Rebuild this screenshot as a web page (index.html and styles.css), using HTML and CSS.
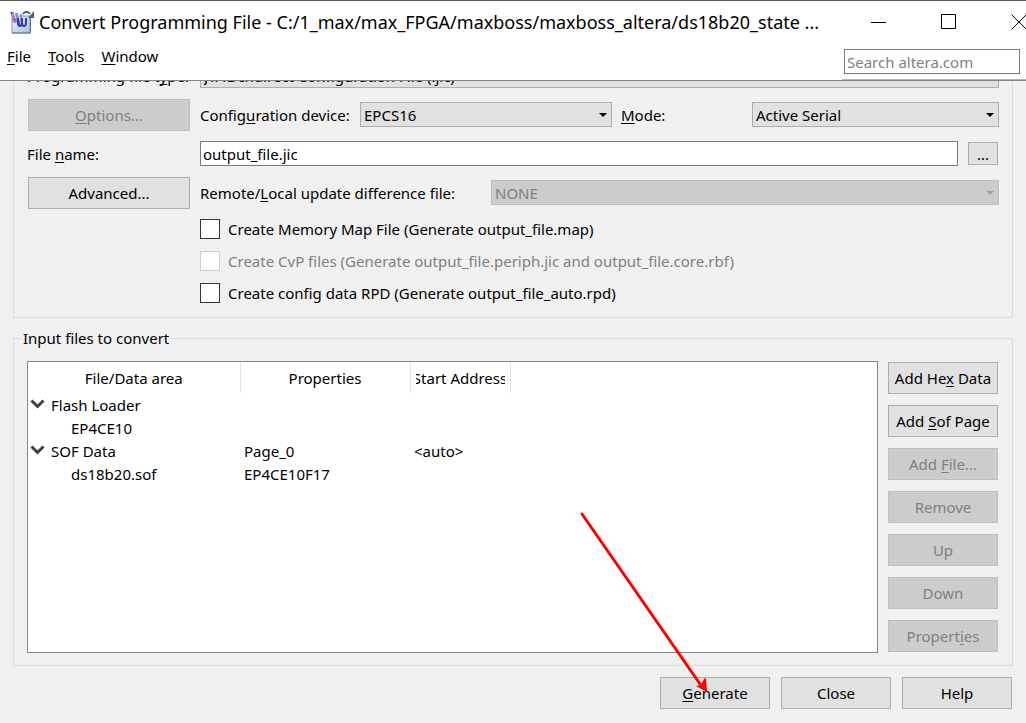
FILE: index.html
```html
<!DOCTYPE html>
<html lang="en">
<head>
    <meta charset="UTF-8">
    <meta name="viewport" content="width=device-width, initial-scale=1.0">
    <title>Convert Programming File</title>
    <link rel="stylesheet" href="styles.css">
</head>
<body>
<header>
    <div class="titlebar">
        <svg class="app-icon" width="24" height="24" viewBox="0 0 24 24">
            <defs>
                <linearGradient id="box" x1="0" y1="0" x2="1" y2="1">
                    <stop offset="0" stop-color="#f4f8fd"/>
                    <stop offset="1" stop-color="#a9bcd8"/>
                </linearGradient>
            </defs>
            <path d="M2 6h18v17H2z" fill="url(#box)" stroke="#8496b4"/>
            <path d="M2 23h18.500V7" fill="none" stroke="#5c7398"/>
            <path d="M1 2l5 10M6 3l4 12" stroke="#c8385c" stroke-width="2"/>
            <path d="M3 2v7c0 4 4 4 4 0V3M7 3v6c0 4 4 4 4 0V4" fill="none" stroke="#7f95dc" stroke-width="2"/>
            <path d="M8 8v5c0 4 4 4 4 0V8M12 8v5c0 4 4 4 4 0V8" fill="none" stroke="#2f3fae" stroke-width="2"/>
            <path d="M13 4c2-3 5-3 7 0" fill="none" stroke="#55606e" stroke-width="2"/>
            <path d="M24 1v7h-6z" fill="#55606e"/>
        </svg>
        <h1>Convert Programming File - C:/1_max/max_FPGA/maxboss/maxboss_altera/ds18b20_state ...</h1>
        <div class="window-buttons">
            <button aria-label="Minimize">
                <svg width="16" height="16" viewBox="0 0 16 16"><path d="M0 8.500h15" stroke="#000"/></svg>
            </button>
            <button aria-label="Maximize">
                <svg width="16" height="16" viewBox="0 0 16 16"><path d="M.5.5h14v14H.5z" fill="none" stroke="#000"/></svg>
            </button>
            <button aria-label="Close window">
                <svg width="16" height="16" viewBox="0 0 16 16"><path d="M.5.5l15 15M15.500.5l-15 15" stroke="#000"/></svg>
            </button>
        </div>
    </div>
    <div class="menubar">
        <nav>
            <a href="#"><u>F</u>ile</a>
            <a href="#"><u>T</u>ools</a>
            <a href="#"><u>W</u>indow</a>
        </nav>
        <div class="search">
            <input type="text" placeholder="Search altera.com" aria-label="Search altera.com">
        </div>
    </div>
</header>

<main>
    <section class="group output">
        <div class="side">
            <label for="fileType">Programming file t<u>y</u>pe:</label>
        </div>
        <div class="row">
            <div class="select grow">
                <select id="fileType">
                    <option>JTAG Indirect Configuration File (.jic)</option>
                </select>
            </div>
        </div>

        <div class="side">
            <button class="btn" disabled><u>O</u>ptions...</button>
        </div>
        <div class="row">
            <label class="device-label" for="device">Config<u>u</u>ration device:</label>
            <div class="select device-select">
                <select id="device">
                    <option>EPCS16</option>
                </select>
            </div>
            <label class="mode-label" for="mode"><u>M</u>ode:</label>
            <div class="select mode-select">
                <select id="mode">
                    <option>Active Serial</option>
                </select>
            </div>
        </div>

        <div class="side">
            <label for="fileName">File <u>n</u>ame:</label>
        </div>
        <div class="row">
            <input class="text grow" type="text" id="fileName" value="output_file.jic">
            <button class="btn browse" aria-label="Browse">...</button>
        </div>

        <div class="side">
            <button class="btn">Advanced...</button>
        </div>
        <div class="row">
            <label class="diff-label" for="diff">Remote/<u>L</u>ocal update difference file:</label>
            <div class="select grow">
                <select id="diff" disabled>
                    <option>NONE</option>
                </select>
            </div>
        </div>

        <div class="checks">
            <label><input type="checkbox"> Create Memory Map File (Generate output_file.map)</label>
            <label class="off"><input type="checkbox" disabled> Create CvP files (Generate output_file.periph.jic and output_file.core.rbf)</label>
            <label><input type="checkbox"> Create config data RPD (Generate output_file_auto.rpd)</label>
        </div>
    </section>

    <fieldset class="group inputs">
        <legend>Input files to convert</legend>
        <div class="inputs-body">
            <div class="tree">
                <table>
                    <colgroup>
                        <col class="col-file">
                        <col class="col-props">
                        <col class="col-start">
                        <col>
                    </colgroup>
                    <thead>
                    <tr>
                        <th><div>File/Data area</div></th>
                        <th><div>Properties</div></th>
                        <th><div>Start Address</div></th>
                        <td></td>
                    </tr>
                    </thead>
                    <tbody>
                    <tr>
                        <td class="parent"><svg width="15" height="10" viewBox="0 0 15 10"><path d="M1.500 1.500l6 6 6-6" fill="none" stroke="#404040" stroke-width="3"/></svg>Flash Loader</td>
                        <td></td>
                        <td></td>
                        <td></td>
                    </tr>
                    <tr>
                        <td class="child">EP4CE10</td>
                        <td></td>
                        <td></td>
                        <td></td>
                    </tr>
                    <tr>
                        <td class="parent"><svg width="15" height="10" viewBox="0 0 15 10"><path d="M1.500 1.500l6 6 6-6" fill="none" stroke="#404040" stroke-width="3"/></svg>SOF Data</td>
                        <td>Page_0</td>
                        <td>&lt;auto&gt;</td>
                        <td></td>
                    </tr>
                    <tr>
                        <td class="child">ds18b20.sof</td>
                        <td>EP4CE10F17</td>
                        <td></td>
                        <td></td>
                    </tr>
                    </tbody>
                </table>
            </div>
            <div class="actions">
                <button class="btn">Add He<u>x</u> Data</button>
                <button class="btn">Add <u>S</u>of Page</button>
                <button class="btn" disabled>Add <u>F</u>ile...</button>
                <button class="btn" disabled>Remove</button>
                <button class="btn" disabled>Up</button>
                <button class="btn" disabled>Down</button>
                <button class="btn" disabled>Propert<u>i</u>es</button>
            </div>
        </div>
    </fieldset>

    <footer>
        <div class="generate">
            <button class="btn"><u>G</u>enerate</button>
            <svg class="pointer" width="132" height="186" viewBox="0 0 132 186">
                <path d="M4 4l118 170" stroke="#f00" stroke-width="3" stroke-linecap="round"/>
                <path d="M129 182l-11-6 5-1 3-6 2-1z" fill="#f00"/>
            </svg>
        </div>
        <button class="btn">Close</button>
        <button class="btn">Help</button>
    </footer>
</main>
</body>
</html>
```
FILE: styles.css
```css
:root {
    --bg: #f0f0f0;
    --face: #e1e1e1;
    --face-off: #cccccc;
    --line: #adadad;
    --line-off: #bfbfbf;
    --text-off: #808080;
    --group: #dcdcdc;
    --frame: #828790;
}

* {
    box-sizing: border-box;
}

body {
    display: flex;
    flex-direction: column;
    height: 100vh;
    margin: 0;
    overflow: hidden;
    background: var(--bg);
    color: #000;
    font-family: "Noto Sans", "Open Sans", sans-serif;
    font-size: 15px;
    line-height: 22px;
}

button,
input,
select {
    font: inherit;
    color: inherit;
}

u {
    text-underline-offset: 2px;
    text-decoration-thickness: 1px;
    text-decoration-skip-ink: none;
}

header {
    flex: none;
    background: #fff;
    border-top: 1px solid #5a5a5a;
    border-bottom: 1px solid #82829a;
}

.titlebar {
    display: flex;
    align-items: center;
    height: 42px;
    padding-left: 10px;
}

.app-icon {
    flex: none;
    margin-right: 5px;
}

h1 {
    flex: 1;
    margin: 0;
    font-size: 18px;
    font-weight: 400;
    white-space: nowrap;
}

.window-buttons {
    display: flex;
    flex: none;
    gap: 54px;
}

.window-buttons button {
    display: flex;
    padding: 0;
    border: none;
    background: none;
}

.window-buttons button:last-child {
    margin-right: -1px;
}

.menubar {
    display: flex;
    justify-content: space-between;
    height: 37px;
    padding-left: 7px;
}

nav {
    display: flex;
    gap: 17px;
    padding-top: 2px;
}

nav a {
    color: #000;
    text-decoration: none;
}

.search {
    padding: 6px 6px 4px 2px;
    border-bottom: 1px solid #b4b4b4;
}

.search input,
.text {
    height: 25px;
    padding: 0 2px;
    border: 1px solid #7a7a7a;
    border-radius: 0;
    background: #fff;
}

.search input {
    width: 176px;
}

.search input::placeholder {
    color: var(--text-off);
}

main {
    display: flex;
    flex: 1;
    flex-direction: column;
    min-height: 0;
    padding: 0 13px 14px;
    overflow: hidden;
}

.group {
    margin: 0;
    border: 1px solid var(--group);
}

/* the form is scrolled down a little, so its first row is cut by the header */
.output {
    display: grid;
    flex: none;
    grid-template-columns: 162px 1fr;
    column-gap: 10px;
    margin-top: -38px;
    padding: 12px 13px 14px 14px;
}

.side,
.row {
    display: flex;
    align-items: center;
    height: 39px;
}

.side label {
    margin-left: -1px;
    white-space: nowrap;
}

.row label {
    flex: none;
}

.grow {
    flex: 1;
    min-width: 0;
}

.device-select {
    flex: 51;
}

.mode-select {
    flex: 50;
}

.device-label {
    width: 160px;
}

.mode-label {
    width: 140px;
    padding-left: 9px;
}

.diff-label {
    width: 291px;
}

.btn {
    flex: none;
    height: 32px;
    padding: 0;
    border: 1px solid var(--line);
    background: var(--face);
}

.btn:disabled {
    border-color: var(--line-off);
    background: var(--face-off);
    color: var(--text-off);
}

.side .btn {
    width: 100%;
}

.browse {
    width: 30px;
    height: 23px;
    margin: 0 1px 0 10px;
    line-height: 20px;
}

.select {
    position: relative;
}

.select::after {
    position: absolute;
    top: 11px;
    right: 5px;
    border: 4px solid transparent;
    border-top-color: #000;
    border-bottom: none;
    content: "";
    pointer-events: none;
}

.select:has(:disabled)::after {
    border-top-color: #a0a0a0;
}

select {
    display: block;
    width: 100%;
    height: 25px;
    padding: 0 3px;
    border: 1px solid var(--line);
    border-radius: 0;
    appearance: none;
    background: var(--face);
}

select:disabled {
    border-color: var(--line-off);
    background: var(--face-off);
    color: var(--text-off);
    opacity: 1;
}

.checks {
    display: flex;
    grid-column: 2;
    flex-direction: column;
    gap: 12px;
    padding-top: 7px;
}

.checks label {
    display: flex;
    gap: 8px;
    align-items: center;
    height: 20px;
}

.checks input {
    width: 20px;
    height: 20px;
    margin: 0;
    border: 1px solid #333;
    appearance: none;
    background: #fff;
}

.checks .off {
    color: var(--text-off);
}

.checks .off input {
    border-color: #ccc;
}

.inputs {
    display: flex;
    flex: 1;
    flex-direction: column;
    min-height: 0;
    margin-top: 9px;
    padding: 0 14px 12px 13px;
}

legend {
    margin-left: -6px;
    padding: 0 2px;
}

.inputs-body {
    display: flex;
    flex: 1;
    gap: 10px;
    min-height: 0;
    padding-top: 12px;
}

.tree {
    flex: 1;
    border: 1px solid var(--frame);
    background: #fff;
}

table {
    width: 100%;
    border-collapse: collapse;
    table-layout: fixed;
}

.col-file {
    width: 212px;
}

.col-props {
    width: 170px;
}

.col-start {
    width: 100px;
}

th {
    height: 31px;
    padding: 0 5px;
    border-right: 1px solid #e5e5e5;
    font-weight: 400;
}

th div {
    display: flex;
    justify-content: center;
    overflow: hidden;
    white-space: nowrap;
}

td {
    height: 23px;
    padding: 0 4px;
    white-space: nowrap;
}

.parent {
    padding-left: 2px;
}

.parent svg {
    margin-right: 6px;
    vertical-align: 2px;
}

.child {
    padding-left: 43px;
}

.actions {
    display: flex;
    flex: none;
    flex-direction: column;
    gap: 11px;
    width: 110px;
    padding-top: 1px;
}

footer {
    display: flex;
    flex: none;
    gap: 11px;
    justify-content: flex-end;
    padding: 11px 1px 0 0;
}

footer .btn {
    width: 110px;
}

.generate {
    position: relative;
}

.pointer {
    position: absolute;
    top: -167px;
    left: -82px;
    pointer-events: none;
}
```
